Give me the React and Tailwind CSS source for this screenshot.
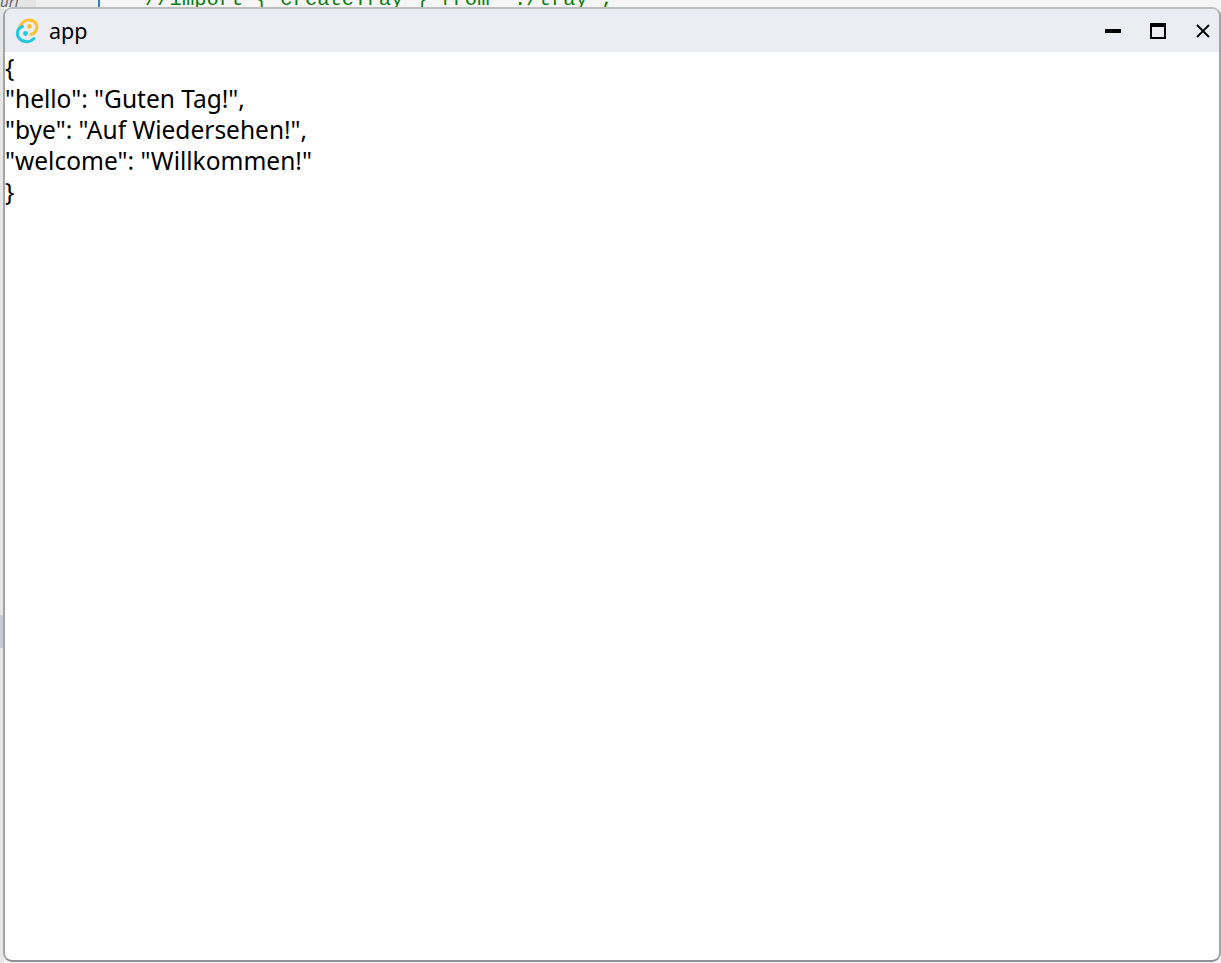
const lines = ['{', '"hello": "Guten Tag!",', '"bye": "Auf Wiedersehen!",', '"welcome": "Willkommen!"', '}']

function TauriIcon() {
  return (
    <svg width="26" height="28" viewBox="0 0 26 28" fill="none" aria-hidden>
      <path d="M4.5 11 C6 6 10 3 14 3 C19.5 3 22.5 7 21.7 11.5 C21.2 14.5 19 16.5 16 17.5" stroke="#ffc131" strokeWidth="3" strokeLinecap="round" />
      <path d="M19 21.5 C16.5 24 13.5 25 10.5 24.5 C5 24 1.7 19.5 2.5 15 C3 12.5 4.5 10.5 7.5 9.5" stroke="#24c8db" strokeWidth="3" strokeLinecap="round" />
      <circle cx="14.5" cy="9.5" r="2.4" fill="#ffc131" />
      <circle cx="10.5" cy="16.5" r="2.4" fill="#24c8db" />
    </svg>
  )
}

function WindowControls() {
  return (
    <div className="ml-auto flex items-center">
      <svg className="mr-[29px]" width="16" height="4" viewBox="0 0 16 4" aria-hidden>
        <rect width="16" height="4" fill="#000" />
      </svg>
      <svg className="mr-[30px]" width="16" height="16" viewBox="0 0 16 16" aria-hidden>
        <path fillRule="evenodd" d="M0 0H16V16H0ZM2 4V14H14V4Z" fill="#000" />
      </svg>
      <svg className="mr-[9px]" width="14" height="14" viewBox="0 0 14 14" fill="none" aria-hidden>
        <path d="M1 1 13 13M13 1 1 13" stroke="#000" strokeWidth="1.8" />
      </svg>
    </div>
  )
}

export default function App() {
  return (
    <div className="relative h-[963px] w-[1221px] overflow-hidden bg-[#f5f5f5] font-['Noto_Sans',sans-serif]">
      {/* editor peeking out behind the window */}
      <div className="absolute inset-0">
        <div className="absolute left-0 top-0 h-[963px] w-[4px] bg-[#e6e6e6]" />
        <div className="absolute left-0 top-0 h-[7px] w-[36px] bg-[#e4e4e4]" />
        <div className="absolute left-[36px] top-0 h-[7px] w-[62px] bg-[#efefef]" />
        <span className="absolute left-0 top-[-10px] text-[15px] italic text-[#666]">uri</span>
        <span className="absolute left-[98px] top-0 h-[7px] w-[2px] bg-[#2f7fc1]" />
        <pre className="absolute left-[145px] top-[-12px] font-['Liberation_Mono',monospace] text-[20.5px] leading-[24px] text-[#0b7d0b]">
          {"//import { createTray } from './tray';"}
        </pre>
        <div className="absolute left-0 top-[615px] h-[33px] w-[4px] bg-[#c6c8d8]" />
      </div>

      <div className="relative ml-[3px] mt-[7px] flex h-[955px] w-[1218px] flex-col overflow-hidden rounded-[9px] border-2 border-x-[#a3a3a3] border-b-[#8f9295] border-t-[#bdbdbd] bg-white">
        <div className="flex h-[43px] shrink-0 items-center bg-[#ecedf2] text-black">
          <div className="ml-[10px] flex w-[34px] shrink-0">
            <TauriIcon />
          </div>
          <span className="text-[21.5px] leading-none">app</span>
          <WindowControls />
        </div>
        <div className="text-[24.5px] leading-[31px] text-black">
          {lines.map((line) => (
            <div key={line}>{line}</div>
          ))}
        </div>
      </div>
    </div>
  )
}
